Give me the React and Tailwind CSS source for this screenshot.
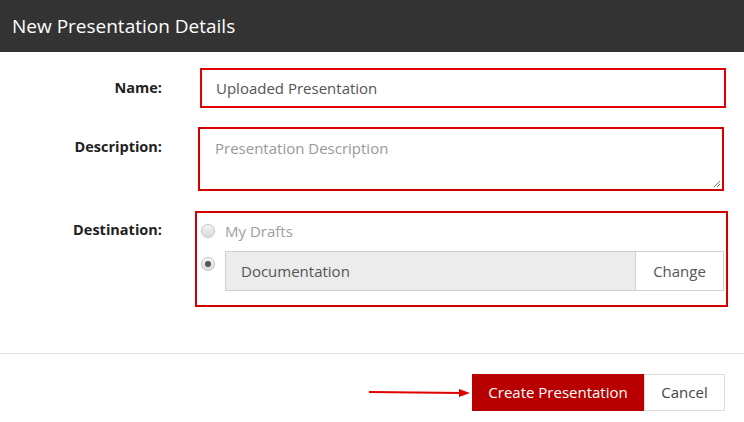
import React from 'react';

const font = { fontFamily: '"Open Sans", Lato, sans-serif' };

function Radio({ checked }) {
  return (
    <span className="w-[14px] h-[14px] rounded-full border border-[#c4c4c4] bg-gradient-to-b from-[#f4f4f4] to-[#dcdcdc] flex items-center justify-center shrink-0">
      {checked && <span className="w-[6px] h-[6px] rounded-full bg-[#555]" />}
    </span>
  );
}

export default function App() {
  return (
    <div className="w-[744px] h-[422px] bg-white overflow-hidden relative" style={font}>
      <div className="h-[52px] bg-[#333333] flex items-center px-3">
        <h1 className="text-[19px] text-white">New Presentation Details</h1>
      </div>

      <div className="pt-4 pr-[18px] h-[302px] border-b border-[#e5e5e5]">
        <div className="flex items-center">
          <label className="w-[162px] text-right text-[14.5px] font-bold text-[#222]">Name:</label>
          <div className="ml-[38px] flex-1 h-[40px] border-2 border-[#e00000] flex items-center px-[14px] text-[15px] text-[#555]">
            Uploaded Presentation
          </div>
        </div>

        <div className="flex items-start mt-[19px] pr-[2px]">
          <label className="w-[162px] text-right text-[14.5px] font-bold text-[#222] pt-[9px]">Description:</label>
          <div className="ml-[36px] flex-1 h-[64px] border-2 border-[#d40000] relative px-[15px] pt-[8px] text-[15px] text-[#999]">
            Presentation Description
            <svg className="absolute right-[1px] bottom-[1px]" width="8" height="8" viewBox="0 0 8 8">
              <path d="M1 7 L7 1 M4 7 L7 4" stroke="#777" strokeWidth="1" />
            </svg>
          </div>
        </div>

        <div className="flex items-start mt-[20px] -mr-[2px]">
          <label className="w-[162px] text-right text-[14.5px] font-bold text-[#222] pt-[8px]">Destination:</label>
          <div className="ml-[33px] flex-1 h-[96px] border-2 border-[#d40000] pl-[4px] pr-[2px] pt-[9px]">
            <div className="flex items-center gap-[10px] h-[18px]">
              <Radio />
              <span className="text-[15px] text-[#a0a0a0]">My Drafts</span>
            </div>
            <div className="flex items-start gap-[10px] mt-[11px]">
              <div className="pt-[6px]"><Radio checked /></div>
              <div className="flex-1 h-[40px] flex border border-[#cfcfcf]">
                <div className="flex-1 bg-[#ececec] flex items-center px-[15px] text-[15px] text-[#555] border-r border-[#cfcfcf]">
                  Documentation
                </div>
                <div className="w-[87px] bg-white flex items-center justify-center text-[15px] text-[#555]">
                  Change
                </div>
              </div>
            </div>
          </div>
        </div>
      </div>

      <div className="flex items-center justify-end pr-[19px] pt-[20px]">
        <svg width="102" height="10" viewBox="0 0 102 10" className="mr-[1px]">
          <line x1="0" y1="4" x2="94" y2="5" stroke="#e00000" strokeWidth="2" />
          <path d="M90 1 L101 5 L90 9 Z" fill="#e00000" />
        </svg>
        <button className="h-[37px] w-[172px] bg-[#b80000] text-white text-[15px] border border-[#b80000]">
          Create Presentation
        </button>
        <button className="h-[37px] w-[81px] bg-white text-[#444] text-[15px] border border-[#dcdcdc]">
          Cancel
        </button>
      </div>
    </div>
  );
}
